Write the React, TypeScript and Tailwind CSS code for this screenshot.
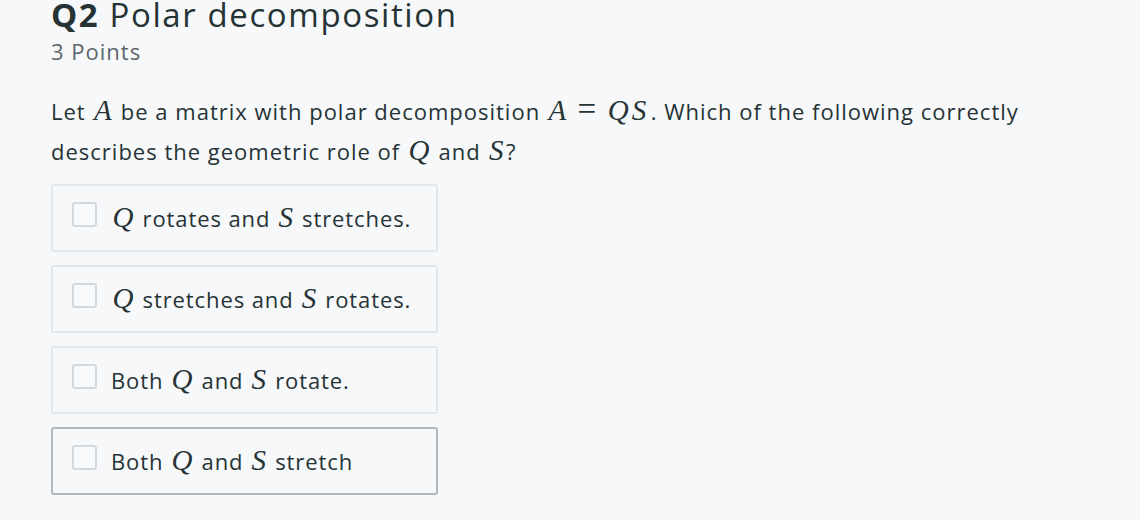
import React from "react";

const M = ({ children }: { children: React.ReactNode }) => (
  <span className="px-[1.5px] font-['Liberation_Serif','DejaVu_Serif',serif] italic text-[29px] leading-none tracking-[1px]">
    {children}
  </span>
);

const options: React.ReactNode[] = [
  <>
    <M>Q</M> rotates and <M>S</M> stretches.
  </>,
  <>
    <M>Q</M> stretches and <M>S</M> rotates.
  </>,
  <>
    Both <M>Q</M> and <M>S</M> rotate.
  </>,
  <>
    Both <M>Q</M> and <M>S</M> stretch
  </>,
];

export default function App() {
  return (
    <div className="min-h-[520px] w-[1140px] bg-[#f7f8fa] pl-[51px] font-['Open_Sans',sans-serif] text-[#253335]">
      <h1 className="text-[33px] leading-[30px] tracking-[1.6px]">
        <span className="font-bold">Q2</span> Polar decomposition
      </h1>
      <div className="mt-[6px] text-[22px] leading-[30px] tracking-[1px] text-[#5b666d]">3 Points</div>
      <p className="mt-[25px] text-[22px] leading-[40px] tracking-[1px]">
        Let <M>A</M> be a matrix with polar decomposition <M>A</M>
        <span className="mx-[9px] font-['Liberation_Serif',serif] text-[33px] leading-none">=</span>
        <span className="px-[1.5px] font-['Liberation_Serif','DejaVu_Serif',serif] italic text-[29px] leading-none tracking-[3px]">
          QS
        </span>
        . Which of the following correctly
        <br />
        describes the geometric role of <M>Q</M> and <M>S</M>?
      </p>
      <div className="mt-[13px] flex w-[387px] flex-col gap-[13px]">
        {options.map((o, i) => (
          <div
            key={i}
            className={
              i === 3
                ? "flex h-[68px] items-start gap-[14px] rounded-[3px] border-2 border-[#b3b8be] pl-[19px] pt-[16px]"
                : "flex h-[68px] items-start gap-[14px] rounded-[3px] border-2 border-[#e3e6ea] pl-[19px] pt-[16px]"
            }
          >
            <span className="h-[25px] w-[25px] shrink-0 rounded-[3px] border-2 border-[#d3d8de] bg-[#f9fafb]" />
            <span className="whitespace-nowrap text-[22px] leading-[32px] tracking-[0.9px]">{o}</span>
          </div>
        ))}
      </div>
    </div>
  );
}
